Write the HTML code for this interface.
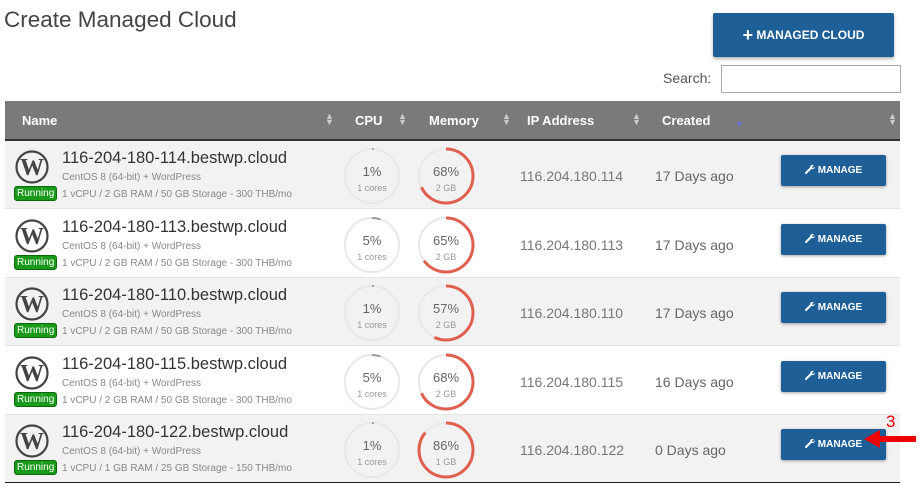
<!DOCTYPE html>
<html><head><meta charset="utf-8"><style>
*{box-sizing:border-box;margin:0;padding:0}
body{width:920px;height:488px;background:#fff;font-family:"Liberation Sans",sans-serif;position:relative;overflow:hidden;color:#555}
h1{position:absolute;left:4px;top:7px;font-size:22.5px;font-weight:normal;color:#444}
.addbtn{position:absolute;left:713px;top:13px;width:181px;height:44px;background:#1d5f96;color:#fff;font-size:12px;font-weight:bold;text-align:center;line-height:44px;border-radius:2px;box-shadow:0 2px 3px rgba(0,0,0,.3)}
.addbtn b{font-size:18px;vertical-align:-2px}
.search{position:absolute;left:663px;top:70px;font-size:14px;color:#555}
.sbox{position:absolute;left:721px;top:65px;width:180px;height:28px;border:1px solid #aaa}
.head{position:absolute;left:5px;top:101px;width:895px;height:40px;background:#7a7a7a;color:#fff;font-weight:bold;font-size:13px;border-bottom:2px solid #333}
.head span{position:absolute;top:12px}
.sa{position:absolute;top:13px;color:#ccc;font-size:9px;line-height:6px}
.row{position:absolute;left:5px;width:895px;height:68px;border-bottom:1px solid #e4e4e4}
.g{background:#f2f2f2}
.wp{position:absolute;left:10px;top:9px;width:34px;height:34px}
.run{position:absolute;left:9px;top:45px;background:#1a9a1a;color:#fff;font-size:10px;padding:1px 2px;border-radius:3px;border:1px solid #0a6a0a}
.nm{position:absolute;left:57px;top:8px;font-size:16.5px;color:#333}
.os{position:absolute;left:57px;top:31px;font-size:10px;color:#888}
.sp{position:absolute;left:57px;top:48px;font-size:10px;color:#888}
.c{position:absolute;top:6px;width:58px;height:58px}
.ct{position:absolute;top:23px;width:58px;text-align:center;font-size:13px;color:#666}
.cs{position:absolute;top:42px;width:58px;text-align:center;font-size:9px;color:#999}
.ip{position:absolute;left:515px;top:27px;font-size:14px;color:#777}
.cr{position:absolute;left:650px;top:27px;font-size:14px;color:#666}
.mb{position:absolute;left:776px;top:14px;width:105px;height:31px;background:#1d5f96;color:#fff;font-size:10px;font-weight:bold;text-align:center;line-height:31px;border-radius:2px;box-shadow:0 1px 3px rgba(0,0,0,.35)}
.mb svg{vertical-align:-1px;margin-right:3px}
</style></head><body>
<h1>Create Managed Cloud</h1>
<div class="addbtn"><b>+</b> MANAGED CLOUD</div>
<div class="search">Search:</div><div class="sbox"></div>
<div class="head">
<span style="left:17px">Name</span><span class="sa" style="left:320px">▲<br>▼</span>
<span style="left:350px">CPU</span><span class="sa" style="left:393px">▲<br>▼</span>
<span style="left:424px">Memory</span><span class="sa" style="left:497px">▲<br>▼</span>
<span style="left:522px">IP Address</span><span class="sa" style="left:627px">▲<br>▼</span>
<span style="left:657px">Created</span><span style="left:730px;top:18px;color:#6b6bd6;font-size:9px">▼</span>
<span class="sa" style="left:883px">▲<br>▼</span>
</div>
<div id="rows"></div>
<div style="position:absolute;left:5px;top:482px;width:895px;height:1px;background:#222"></div>
<div style="position:absolute;left:886px;top:412px;color:#e00;font-size:17px">3</div>
<svg style="position:absolute;left:864px;top:430px" width="52" height="18"><path d="M16 6H52V12H16V18L0 9 16 0Z" fill="#e00"/></svg>
<script>
var d=[["114","1","68","2 GB","1 vCPU / 2 GB RAM / 50 GB Storage - 300 THB/mo","17 Days ago"],
["113","5","65","2 GB","1 vCPU / 2 GB RAM / 50 GB Storage - 300 THB/mo","17 Days ago"],
["110","1","57","2 GB","1 vCPU / 2 GB RAM / 50 GB Storage - 300 THB/mo","17 Days ago"],
["115","5","68","2 GB","1 vCPU / 2 GB RAM / 50 GB Storage - 300 THB/mo","16 Days ago"],
["122","1","86","1 GB","1 vCPU / 1 GB RAM / 25 GB Storage - 150 THB/mo","0 Days ago"]];
var C=2*Math.PI*27,h="";
function circ(x,p,col,w){return '<svg class="c" style="left:'+x+'px" viewBox="0 0 58 58"><circle cx="29" cy="29" r="27" fill="none" stroke="#e8e8e8" stroke-width="2"/><circle cx="29" cy="29" r="27" fill="none" stroke="'+col+'" stroke-width="'+w+'" stroke-dasharray="'+(C*p/100)+' '+C+'" transform="rotate(-90 29 29)"/></svg>';}
var wrench='<svg width="10" height="10" viewBox="0 0 10 10"><path d="M1 9 L5.5 4.5" stroke="#fff" stroke-width="2" stroke-linecap="round"/><path d="M5 3.5 A2.6 2.6 0 0 1 8.8 1.2 L7.2 2.8 7.4 3.8 8.4 4 10 2.4 A2.6 2.6 0 0 1 6.5 5 Z" fill="#fff"/></svg>';
d.forEach(function(r,i){
h+='<div class="row'+(i%2==0?' g':'')+'" style="top:'+(141+i*68.5)+'px">'+
'<svg class="wp" viewBox="0 0 34 34"><circle cx="17" cy="17" r="15.5" fill="none" stroke="#444" stroke-width="2.2"/><text x="17" y="25" text-anchor="middle" font-family="Liberation Serif" font-weight="bold" font-size="24" fill="#444">W</text></svg>'+
'<div class="run">Running</div><div class="nm">116-204-180-'+r[0]+'.bestwp.cloud</div><div class="os">CentOS 8 (64-bit) + WordPress</div><div class="sp">'+r[4]+'</div>'+
circ(338,r[1],'#999',2)+'<div class="ct" style="left:338px">'+r[1]+'%</div><div class="cs" style="left:338px">1 cores</div>'+
circ(412,r[2],'#e06050',3)+'<div class="ct" style="left:412px">'+r[2]+'%</div><div class="cs" style="left:412px">'+r[3]+'</div>'+
'<div class="ip">116.204.180.'+r[0]+'</div><div class="cr">'+r[5]+'</div><div class="mb">'+wrench+'MANAGE</div></div>';});
document.getElementById('rows').innerHTML=h;
</script>
</body></html>
